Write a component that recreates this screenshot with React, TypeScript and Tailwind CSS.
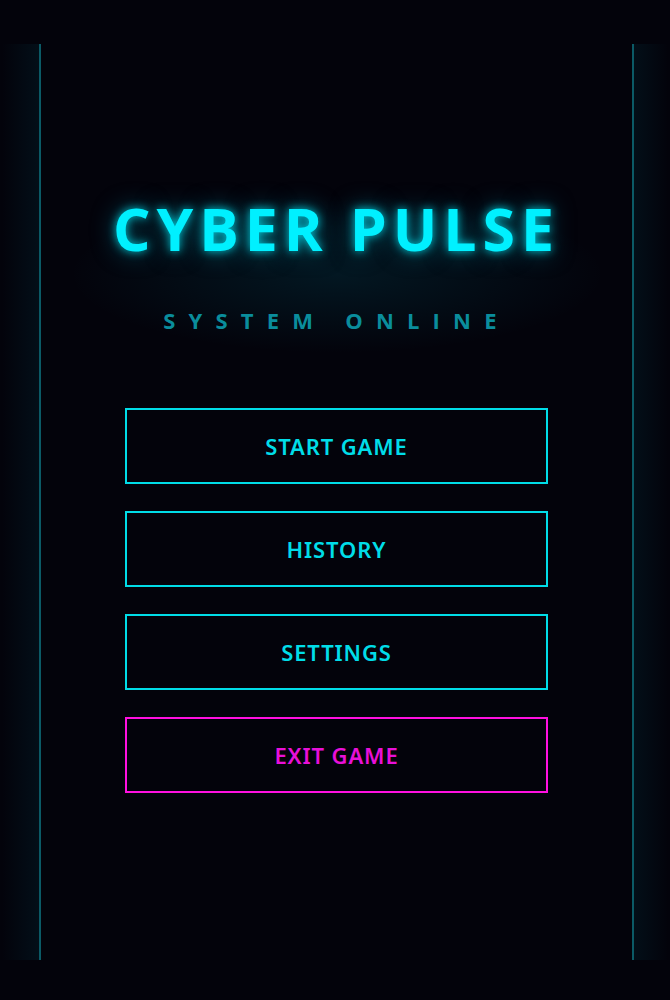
import React from 'react';

const menuItems = [
  { label: 'START GAME', danger: false },
  { label: 'HISTORY', danger: false },
  { label: 'SETTINGS', danger: false },
  { label: 'EXIT GAME', danger: true },
];

const MenuButton = ({ label, danger }: { label: string; danger: boolean }) => (
  <button
    className={`h-[76px] w-full border-2 bg-transparent text-[22px] font-semibold tracking-[0.04em] ${
      danger ? 'border-[#ff10e0] text-[#e810d8]' : 'border-[#00dde8] text-[#00dde8]'
    }`}
    style={{ fontFamily: '"Noto Sans", "Open Sans", sans-serif' }}
  >
    {label}
  </button>
);

const App = () => {
  return (
    <div className="min-h-screen w-full bg-[#03030b] pl-[39px] pr-[36px] py-[44px]">
      <div className="relative flex h-[916px] flex-col items-center border-x-2 border-[#0b5a66]">
        {/* side glows outside the frame lines */}
        <div className="pointer-events-none absolute -left-[39px] top-0 h-full w-[37px] bg-gradient-to-l from-[rgba(0,170,200,0.07)] to-transparent" />
        <div className="pointer-events-none absolute -right-[36px] top-0 h-full w-[34px] bg-gradient-to-r from-[rgba(0,170,200,0.07)] to-transparent" />

        {/* soft halo behind the title */}
        <div className="pointer-events-none absolute left-1/2 top-[150px] h-[160px] w-[540px] -translate-x-1/2 rounded-full bg-[radial-gradient(ellipse_at_center,rgba(0,170,200,0.12),transparent_70%)]" />

        <h1
          className="relative mt-[155px] text-[59px] font-bold leading-none tracking-[0.1em] text-[#00f0ff] [text-shadow:0_0_10px_rgba(0,240,255,0.8),0_0_24px_rgba(0,200,230,0.5)]"
          style={{ fontFamily: '"Open Sans", "Noto Sans", sans-serif' }}
        >
          CYBER PULSE
        </h1>

        <p
          className="relative mt-[51px] text-[22px] font-bold leading-none tracking-[0.6em] text-[#0a8d9c]"
          style={{ fontFamily: '"Open Sans", "Noto Sans", sans-serif' }}
        >
          SYSTEM ONLINE
        </p>

        <div className="mt-[77px] flex w-[423px] flex-col gap-[27px]">
          {menuItems.map((item) => (
            <MenuButton key={item.label} label={item.label} danger={item.danger} />
          ))}
        </div>
      </div>
    </div>
  );
};

export default App;
